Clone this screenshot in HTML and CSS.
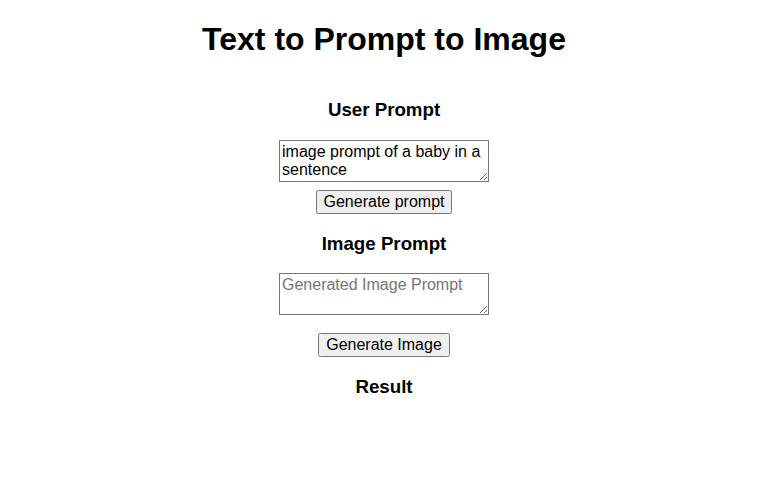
FILE: index.html
```html
<!DOCTYPE html>
<html>
<head>
  <title>Text to Prompt to Image</title>
  <link rel="stylesheet" href="styles.css">
</head>
<body>
  <div class="page">
    <h1>Text to Prompt to Image</h1>

    <h3>User Prompt</h3>
    <textarea id="userPrompt" class="prompt-box">image prompt of a baby in a sentence</textarea>
    <button class="btn btn-first" onclick="generarPrompt()">Generate prompt</button>

    <h3>Image Prompt</h3>
    <textarea id="imagePrompt" class="prompt-box" placeholder="Generated Image Prompt"></textarea>
    <button class="btn btn-second" onclick="generarImagen()">Generate Image</button>

    <h3>Result</h3>
    <div id="result" class="result"></div>
  </div>

  <script>
    function generarPrompt() {
      const texto = document.getElementById("userPrompt").value;
      document.getElementById("imagePrompt").value = texto;
    }

    function generarImagen() {
      // sin red: no hay imagen que mostrar
    }
  </script>
</body>
</html>
```

FILE: styles.css
```css
body {
    margin: 0;
    font-family: "Liberation Sans", Arial, sans-serif;
    color: #000;
    background: #fff;
}

.page {
    display: flex;
    flex-direction: column;
    align-items: center;
    text-align: center;
}

h1 {
    font-size: 32px;
    margin: 21px 0 22px 0;
}

h3 {
    font-size: 18.72px;
    margin: 19px 0 18.72px 0;
}

.prompt-box {
    width: 210px;
    height: 42px;
    box-sizing: border-box;
    padding: 2px;
    border: 1px solid #767676;
    font-family: "Liberation Sans", Arial, sans-serif;
    font-size: 16px;
    resize: vertical;
}

.btn {
    font-family: "Liberation Sans", Arial, sans-serif;
    font-size: 16px;
}

.btn-first {
    margin-top: 8px;
}

.btn-second {
    margin-top: 18px;
}
```
